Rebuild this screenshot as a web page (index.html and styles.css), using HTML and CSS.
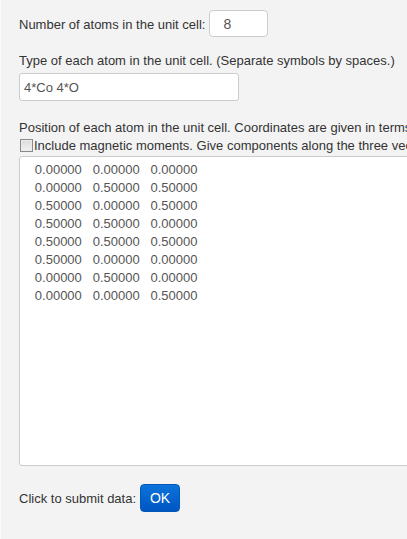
FILE: index.html
```html
<!DOCTYPE html>
<html>
<head>
<meta charset="utf-8">
<link rel="stylesheet" href="styles.css">
</head>
<body>
<div class="page">
  <div class="row first">
    <span class="label">Number of atoms in the unit cell:</span>
    <input class="num" type="text" value="8">
  </div>
  <div class="label block types-label">Type of each atom in the unit cell. (Separate symbols by spaces.)</div>
  <input class="types" type="text" value="4*Co 4*O">
  <div class="label block pos-label">Position of each atom in the unit cell. Coordinates are given in terms of the three vectors.</div>
  <div class="label check-line"><span class="check"></span>Include magnetic moments. Give components along the three vectors.</div>
  <textarea class="coords">   0.00000   0.00000   0.00000
   0.00000   0.50000   0.50000
   0.50000   0.00000   0.50000
   0.50000   0.50000   0.00000
   0.50000   0.50000   0.50000
   0.50000   0.00000   0.00000
   0.00000   0.50000   0.00000
   0.00000   0.00000   0.50000</textarea>
  <div class="row submit">
    <span class="label">Click to submit data:</span>
    <button class="ok">OK</button>
  </div>
</div>
</body>
</html>
```

FILE: styles.css
```css
html, body {
  margin: 0;
  padding: 0;
  background: #f3f3f3;
  height: 100%;
  overflow: hidden;
}
.page {
  border-left: 1px solid #f9f9f9;
  padding: 10px 0 0 18px;
  font-family: "Liberation Sans", Arial, sans-serif;
  font-size: 13px;
  color: #333;
  height: 100%;
  box-sizing: border-box;
  white-space: nowrap;
}
.label {
  line-height: 15px;
}
.block {
  display: block;
}
.row {
  display: flex;
  align-items: center;
}
.row.first .label {
  padding-top: 2px;
}
.num {
  margin-left: 4px;
  width: 59px;
  height: 27px;
  box-sizing: border-box;
  border: 1px solid #ccc;
  border-radius: 4px;
  background: #fff;
  padding: 0 13px;
  font: 14px "Liberation Sans", Arial, sans-serif;
  color: #555;
  outline: none;
}
.types-label {
  margin-top: 16px;
}
.types {
  display: block;
  margin-top: 5px;
  width: 220px;
  height: 28px;
  box-sizing: border-box;
  border: 1px solid #ccc;
  border-radius: 3px;
  background: #fff;
  padding: 0 4px;
  font: 13px "Liberation Sans", Arial, sans-serif;
  color: #555;
  outline: none;
}
.pos-label {
  margin-top: 19px;
}
.check-line {
  display: flex;
  align-items: center;
  margin-top: 3px;
}
.check {
  flex: 0 0 auto;
  display: inline-block;
  width: 11px;
  height: 11px;
  border: 1px solid #8a8a8a;
  background: linear-gradient(#dcdcdc, #f2f2f2);
  box-shadow: inset 0 0 0 1px #ebebeb;
  margin: 0 1px 0 1px;
}
.coords {
  display: block;
  margin-top: 3px;
  width: 420px;
  height: 310px;
  box-sizing: border-box;
  border: 1px solid #ccc;
  border-radius: 3px;
  background: #fff;
  padding: 4px 4px;
  font: 13px/18px "Liberation Sans", Arial, sans-serif;
  color: #555;
  resize: none;
  outline: none;
  white-space: pre;
  overflow: hidden;
}
.submit {
  margin-top: 18px;
}
.ok {
  margin-left: 4px;
  width: 40px;
  height: 28px;
  border: 1px solid #0058b8;
  border-radius: 4px;
  background: linear-gradient(#0a74da, #0055c2);
  color: #fff;
  font: 14px "Liberation Sans", Arial, sans-serif;
  padding: 0;
}
```
